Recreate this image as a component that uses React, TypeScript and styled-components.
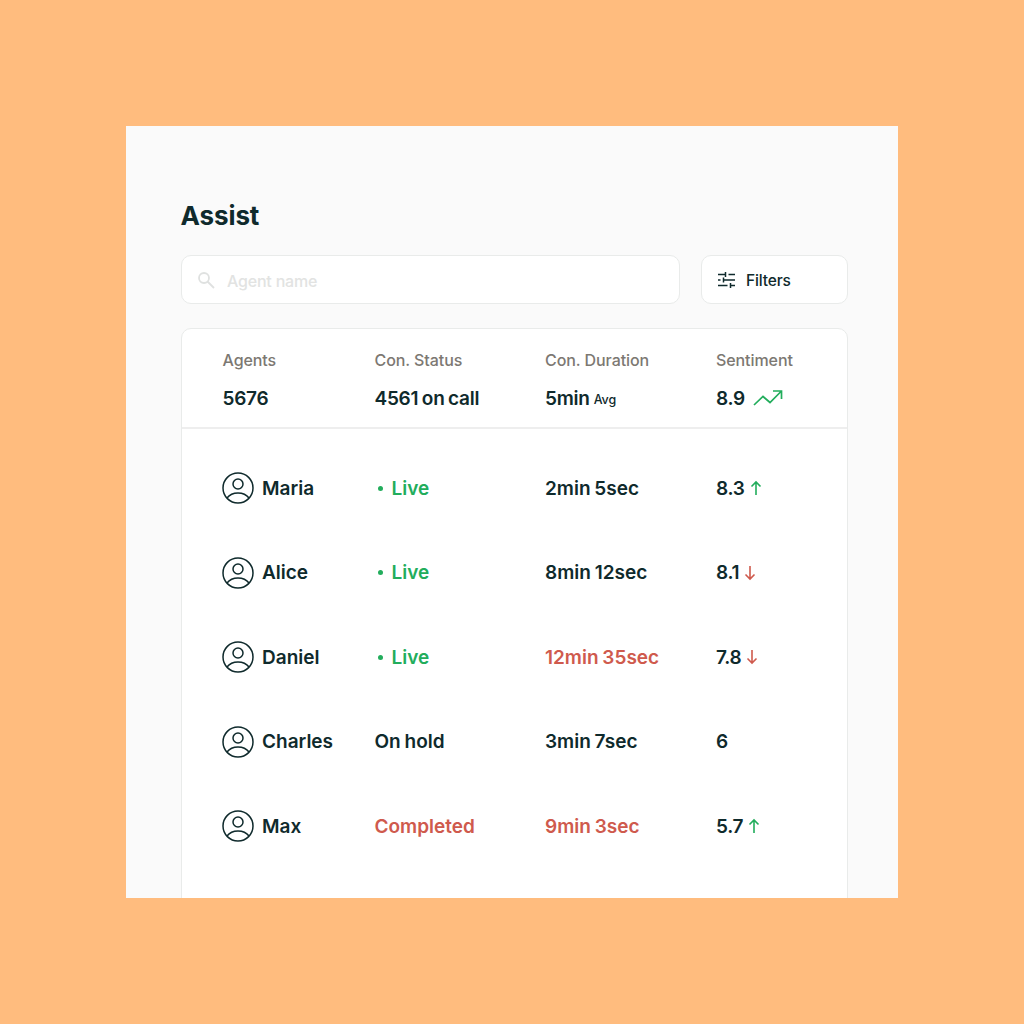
import { createGlobalStyle, styled } from "styled-components";

const GlobalStyle = createGlobalStyle`
	html, body {
		margin: 0;
		padding: 0;
		background: #ffbc7e;
		font-family: Inter, "Noto Sans", sans-serif;
	}
`;

const Page = styled.div`
	width: 1024px;
	height: 1024px;
	padding: 126px;
	box-sizing: border-box;
`;

const Panel = styled.main`
	width: 772px;
	height: 772px;
	box-sizing: border-box;
	padding: 73px 50px 0 55px;
	background: #fafafa;
	overflow: hidden;
`;

const Title = styled.h1`
	margin: 0 0 23px -0.5px;
	height: 33px;
	font-size: 26px;
	line-height: 33px;
	font-weight: 700;
	letter-spacing: -0.1px;
	color: #0f2a2c;
`;

const Toolbar = styled.div`
	display: flex;
	gap: 21px;
	margin-bottom: 24px;
`;

const SearchBox = styled.label`
	flex: 1;
	height: 49px;
	box-sizing: border-box;
	display: flex;
	align-items: center;
	gap: 11px;
	padding-left: 16px;
	background: #fff;
	border: 1px solid #e9ebea;
	border-radius: 10px;
`;

const SearchInput = styled.input`
	flex: 1;
	border: none;
	outline: none;
	background: transparent;
	padding: 2px 0 0 0;
	font: 500 16px Inter, sans-serif;
	letter-spacing: -0.2px;

	&::placeholder {
		color: #e2e3e2;
		opacity: 1;
	}
`;

const FilterButton = styled.button`
	width: 147px;
	height: 49px;
	box-sizing: border-box;
	display: flex;
	align-items: center;
	gap: 10px;
	padding: 0 0 0 16px;
	background: #fff;
	border: 1px solid #e9ebea;
	border-radius: 10px;
	font: 500 15.5px Inter, sans-serif;
	letter-spacing: -0.15px;
	color: #0f2a2c;
`;

const FilterLabel = styled.span`
	padding-top: 1px;
`;

const Card = styled.section`
	background: #fff;
	border: 1px solid #e9ebea;
	border-radius: 10px 10px 0 0;
	height: 600px;
	box-sizing: border-box;
`;

const Columns = styled.div`
	display: grid;
	grid-template-columns: 152px 170.5px 171px 1fr;
	padding-left: 40.5px;
`;

const Summary = styled(Columns)`
	height: 100px;
	box-sizing: border-box;
	padding-top: 21px;
	border-bottom: 2px solid #eeeeee;
`;

const Label = styled.div`
	font-size: 16px;
	line-height: 20px;
	font-weight: 500;
	letter-spacing: -0.08px;
	color: #7c7872;
	margin-bottom: 18px;
`;

const Stat = styled.div`
	display: flex;
	align-items: center;
	height: 20px;
	font-size: 19px;
	font-weight: 600;
	letter-spacing: -0.25px;
	word-spacing: -1px;
	color: #0f2a2c;
`;

const Unit = styled.span`
	font-size: 12.5px;
	font-weight: 500;
	letter-spacing: -0.1px;
	margin: 3px 0 0 4px;
`;

const TrendIcon = styled.svg`
	width: 30px;
	height: 20px;
	margin-left: 8px;
	fill: none;
	stroke: #22ad5c;
	stroke-width: 1.7;
`;

const Rows = styled.div`
	padding-top: 17px;
`;

const Row = styled(Columns)`
	height: 84.5px;
	align-items: center;
	font-size: 19px;
	font-weight: 600;
	letter-spacing: 0;
	word-spacing: -1px;
	color: #0f2a2c;
`;

const AgentCell = styled.div`
	display: flex;
	align-items: center;
	gap: 8px;
	margin-left: -0.5px;
`;

const Avatar = styled.svg`
	width: 32px;
	height: 32px;
	fill: none;
	stroke: #0f2a2c;
	stroke-width: 1.5;
`;

const Tone = styled.div<{ $tone?: "good" | "bad" }>`
	color: ${(p) =>
		p.$tone === "good" ? "#22ad5c" : p.$tone === "bad" ? "#cf5a4d" : "#0f2a2c"};
`;

const LiveDot = styled.span`
	display: inline-block;
	width: 5px;
	height: 5px;
	border-radius: 50%;
	background: #22ad5c;
	margin: 0 8.500px 3px 3.500px;
	vertical-align: middle;
`;

const Score = styled.div`
	display: flex;
	align-items: center;
	gap: 4px;
	letter-spacing: -0.3px;
`;

const ArrowIcon = styled.svg<{ $up: boolean }>`
	width: 14px;
	height: 18px;
	fill: none;
	stroke: ${(p) => (p.$up ? "#22ad5c" : "#cf5a4d")};
	stroke-width: 1.6;
`;

type Agent = {
	name: string;
	status: string;
	statusTone?: "good" | "bad";
	duration: string;
	late?: boolean;
	score: string;
	trend?: "up" | "down";
};

const agents: Agent[] = [
	{ name: "Maria", status: "Live", statusTone: "good", duration: "2min 5sec", score: "8.3", trend: "up" },
	{ name: "Alice", status: "Live", statusTone: "good", duration: "8min 12sec", score: "8.1", trend: "down" },
	{ name: "Daniel", status: "Live", statusTone: "good", duration: "12min 35sec", late: true, score: "7.8", trend: "down" },
	{ name: "Charles", status: "On hold", duration: "3min 7sec", score: "6" },
	{ name: "Max", status: "Completed", statusTone: "bad", duration: "9min 3sec", late: true, score: "5.7", trend: "up" },
];

function UserIcon() {
	return (
		<Avatar viewBox="0 0 32 32">
			<circle cx="16" cy="16" r="15" />
			<circle cx="16" cy="12" r="5" />
			<path d="M5 26c2.600-3.400 6.600-5 11-5s8.400 1.600 11 5" />
		</Avatar>
	);
}

function Arrow({ up }: { up: boolean }) {
	return (
		<ArrowIcon $up={up} viewBox="0 0 14 18">
			{up ? <path d="M7 16V3M2.500 7.500 7 3l4.500 4.500" /> : <path d="M7 2v13M2.500 10.500 7 15l4.500-4.500" />}
		</ArrowIcon>
	);
}

function SearchGlyph() {
	return (
		<svg width="18" height="18" viewBox="0 0 18 18" fill="none" stroke="#dfe1e0" strokeWidth="1.8">
			<circle cx="6" cy="7" r="5" />
			<path d="M9.500 10.500 16 17" />
		</svg>
	);
}

function SlidersIcon() {
	return (
		<svg width="18" height="18" viewBox="0 0 18 18" fill="none" stroke="#0f2a2c" strokeWidth="1.5">
			<path d="M0 3.500h7.500M10.500 3.500H17M7.500 1v5M0 9h2.500M5.500 9H17M5.500 6.500v5M0 14.500h9.500M12.500 14.500H17M12.500 12v5" />
		</svg>
	);
}

export default function App() {
	return (
		<Page>
			<GlobalStyle />
			<Panel>
				<Title>Assist</Title>
				<Toolbar>
					<SearchBox>
						<SearchGlyph />
						<SearchInput placeholder="Agent name" />
					</SearchBox>
					<FilterButton>
						<SlidersIcon />
						<FilterLabel>Filters</FilterLabel>
					</FilterButton>
				</Toolbar>
				<Card>
					<Summary>
						<div>
							<Label>Agents</Label>
							<Stat>5676</Stat>
						</div>
						<div>
							<Label>Con. Status</Label>
							<Stat>4561 on call</Stat>
						</div>
						<div>
							<Label>Con. Duration</Label>
							<Stat>
								5min<Unit>Avg</Unit>
							</Stat>
						</div>
						<div>
							<Label>Sentiment</Label>
							<Stat>
								8.9
								<TrendIcon viewBox="0 0 30 20">
									<path d="M1 17l9-8.500 7 6L28.500 3M20 3h8.500v8" />
								</TrendIcon>
							</Stat>
						</div>
					</Summary>
					<Rows>
						{agents.map((a) => (
							<Row key={a.name}>
								<AgentCell>
									<UserIcon />
									{a.name}
								</AgentCell>
								<Tone $tone={a.statusTone}>
									{a.status === "Live" && <LiveDot />}
									{a.status}
								</Tone>
								<Tone $tone={a.late ? "bad" : undefined}>{a.duration}</Tone>
								<Score>
									{a.score}
									{a.trend && <Arrow up={a.trend === "up"} />}
								</Score>
							</Row>
						))}
					</Rows>
				</Card>
			</Panel>
		</Page>
	);
}
